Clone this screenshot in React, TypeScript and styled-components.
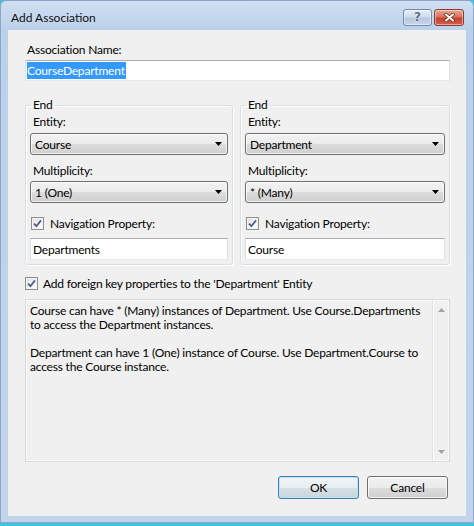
import styled, { createGlobalStyle } from "styled-components";

const GlobalStyle = createGlobalStyle`
  html, body {
    margin: 0;
    padding: 0;
  }
  body {
    background: #41c1dd;
    font-family: Lato, "Liberation Sans", sans-serif;
    font-size: 12px;
    color: #000;
  }
  * {
    box-sizing: border-box;
  }
`;

const Window = styled.div`
  width: 474px;
  height: 523px;
  border: 1px solid #8ea5c4;
  border-radius: 6px 6px 0 0;
  background: linear-gradient(180deg, #d0e0f2 0px, #bbd0ea 29px, #c2d5ec 100%);
  display: flex;
  flex-direction: column;
`;

const TitleBar = styled.div`
  height: 29px;
  flex: none;
  padding: 3px 9px 0 10px;
  display: flex;
  align-items: center;
  justify-content: space-between;
`;

const Title = styled.span`
  font-size: 12px;
  color: #111;
`;

const CaptionButtons = styled.div`
  display: flex;
  gap: 2px;
`;

const CaptionButton = styled.div<{ $close?: boolean; $w: number }>`
  width: ${({ $w }) => $w}px;
  height: 17px;
  border-radius: 3px;
  border: 1px solid ${({ $close }) => ($close ? "#8d3b30" : "#7189ab")};
  background: ${({ $close }) =>
    $close
      ? "linear-gradient(180deg, #e9a797 0%, #d7735f 45%, #c4432f 55%, #d2614b 100%)"
      : "linear-gradient(180deg, #e6eef8 0%, #cfdcec 45%, #b7c9e0 55%, #c7d6e8 100%)"};
  box-shadow: inset 0 0 0 1px rgba(255, 255, 255, 0.45);
  display: flex;
  align-items: center;
  justify-content: center;
`;

const HelpGlyph = styled.span`
  font-family: "DejaVu Sans", sans-serif;
  font-size: 12px;
  font-weight: bold;
  line-height: 1;
  color: #5d6f8b;
  text-shadow: 0 0 1px #fff, 0 0 1px #fff;
`;

const Client = styled.div`
  flex: 1;
  margin: 0 7px 6px 7px;
  background: #f0f0f0;
  padding: 0 16px 0 17px;
  letter-spacing: -0.2px;
  display: flex;
  flex-direction: column;
`;

const Label = styled.div<{ $top?: number; $indent?: number }>`
  line-height: 16px;
  height: 16px;
  margin-top: ${({ $top }) => $top ?? 0}px;
  padding-left: ${({ $indent }) => $indent ?? 0}px;
  white-space: nowrap;
`;

const TextBox = styled.div<{ $top?: number; $h: number }>`
  height: ${({ $h }) => $h}px;
  margin-top: ${({ $top }) => $top ?? 0}px;
  background: #fff;
  border: 1px solid #dbdfe6;
  border-top-color: #abadb3;
  border-bottom-color: #e3e9ef;
  padding: 0 2px;
  display: flex;
  align-items: center;
  white-space: nowrap;
`;

const Selected = styled.span`
  background: #3399ff;
  color: #fff;
  line-height: 17px;
  padding: 0 1px 0 0;
  margin-left: -1px;
`;

const Groups = styled.div`
  display: grid;
  grid-template-columns: 208px 210px;
  gap: 7px;
  margin-top: 16px;
`;

const Group = styled.fieldset`
  margin: 0;
  min-width: 0;
  border: 1px solid #d5dfe5;
  border-radius: 3px;
  box-shadow: inset 1px 1px 0 #fff, 1px 1px 0 #fff;
  padding: 0 4px 4px 4px;
  display: flex;
  flex-direction: column;
`;

const Legend = styled.legend`
  padding: 0 2px;
  margin-left: 1px;
  line-height: 16px;
  font-size: 12px;
`;

const Combo = styled.div<{ $top: number }>`
  height: 22px;
  margin-top: ${({ $top }) => $top}px;
  border: 1px solid #707070;
  border-radius: 3px;
  background: linear-gradient(180deg, #f2f2f2 0%, #ebebeb 50%, #dddddd 50%, #cfcfcf 100%);
  box-shadow: inset 0 0 0 1px rgba(255, 255, 255, 0.7);
  padding: 0 5px 0 4px;
  display: flex;
  align-items: center;
  justify-content: space-between;
  white-space: nowrap;
`;

const CheckRow = styled.div<{ $top: number; $gap: number }>`
  height: 16px;
  margin-top: ${({ $top }) => $top}px;
  display: flex;
  align-items: center;
  gap: ${({ $gap }) => $gap}px;
  white-space: nowrap;
`;

const CheckBox = styled.span<{ $shift?: number }>`
  width: 13px;
  height: 13px;
  flex: none;
  margin-left: ${({ $shift }) => $shift ?? 0}px;
  border: 1px solid #8e8f8f;
  background: linear-gradient(135deg, #dcdcdc 0%, #f6f6f6 60%, #ffffff 100%);
  box-shadow: inset 0 0 0 1px #f4f4f4;
  display: flex;
  align-items: center;
  justify-content: center;
`;

const Description = styled.div`
  height: 163px;
  margin-top: 8px;
  border: 1px solid #d9d9d9;
  box-shadow: inset 0 0 0 1px #f9f9f9;
  background: #f0f0f0;
  display: flex;
`;

const DescriptionText = styled.div`
  flex: 1;
  padding: 4px 0 0 4px;
  line-height: 14px;
  white-space: pre;
  color: #000;
`;

const ScrollBar = styled.div`
  width: 16px;
  flex: none;
  border-left: 1px solid #fbfbfb;
  box-shadow: -1px 0 0 #e4e4e4;
  display: flex;
  flex-direction: column;
  justify-content: space-between;
  align-items: center;
  padding: 8px 0 7px 0;
`;

const ButtonRow = styled.div`
  display: flex;
  justify-content: flex-end;
  gap: 8px;
  margin-top: 14px;
  margin-right: 2px;
`;

const Button = styled.div<{ $default?: boolean }>`
  width: 81px;
  height: 23px;
  border-radius: 3px;
  border: 1px solid ${({ $default }) => ($default ? "#3c7fb1" : "#707070")};
  background: ${({ $default }) =>
    $default
      ? "linear-gradient(180deg, #f0f4f7 0%, #e8eef2 50%, #d6e0e6 50%, #c9d5dc 100%)"
      : "linear-gradient(180deg, #f2f2f2 0%, #ebebeb 50%, #dddddd 50%, #cfcfcf 100%)"};
  box-shadow: inset 0 0 0 1px
    ${({ $default }) => ($default ? "#bfe3f7" : "rgba(255, 255, 255, 0.75)")};
  display: flex;
  align-items: center;
  justify-content: center;
`;

function Arrow() {
  return (
    <svg width="7" height="4" viewBox="0 0 7 4">
      <path d="M0 0 H7 L3.5 4 Z" fill="#000" />
    </svg>
  );
}

function ScrollArrow({ up }: { up?: boolean }) {
  return (
    <svg width="7" height="4" viewBox="0 0 7 4">
      <path d={up ? "M0 4 H7 L3.5 0 Z" : "M0 0 H7 L3.5 4 Z"} fill="#a3a3a3" />
    </svg>
  );
}

function Tick() {
  return (
    <svg width="9" height="9" viewBox="0 0 9 9">
      <path d="M1 4.6 L3.4 7.2 L8 1.4" fill="none" stroke="#4a5f8c" strokeWidth="1.8" />
    </svg>
  );
}

function CloseGlyph() {
  return (
    <svg width="11" height="9" viewBox="0 0 11 9">
      <path d="M2 1.5 L9 7.5 M9 1.5 L2 7.5" stroke="#6b2418" strokeWidth="3.4" strokeLinecap="round" />
      <path d="M2 1.5 L9 7.5 M9 1.5 L2 7.5" stroke="#fff" strokeWidth="2" strokeLinecap="round" />
    </svg>
  );
}

type EndProps = {
  entity: string;
  multiplicity: string;
  navigation: string;
};

function EndGroup({ entity, multiplicity, navigation }: EndProps) {
  return (
    <Group>
      <Legend>End</Legend>
      <Label $top={1} $indent={3}>Entity:</Label>
      <Combo $top={3}>
        <span>{entity}</span>
        <Arrow />
      </Combo>
      <Label $top={8} $indent={3}>Multiplicity:</Label>
      <Combo $top={2}>
        <span>{multiplicity}</span>
        <Arrow />
      </Combo>
      <CheckRow $top={12} $gap={6}>
        <CheckBox $shift={1}>
          <Tick />
        </CheckBox>
        <span>Navigation Property:</span>
      </CheckRow>
      <TextBox $top={7} $h={22}>{navigation}</TextBox>
    </Group>
  );
}

const description = `Course can have * (Many) instances of Department. Use Course.Departments
to access the Department instances.

Department can have 1 (One) instance of Course. Use Department.Course to
access the Course instance.`;

export default function App() {
  return (
    <>
      <GlobalStyle />
      <Window>
        <TitleBar>
          <Title>Add Association</Title>
          <CaptionButtons>
            <CaptionButton $w={29}>
              <HelpGlyph>?</HelpGlyph>
            </CaptionButton>
            <CaptionButton $w={30} $close>
              <CloseGlyph />
            </CaptionButton>
          </CaptionButtons>
        </TitleBar>
        <Client>
          <Label $top={12} $indent={2}>Association Name:</Label>
          <TextBox $top={2} $h={21}>
            <Selected>CourseDepartment</Selected>
          </TextBox>
          <Groups>
            <EndGroup entity="Course" multiplicity="1 (One)" navigation="Departments" />
            <EndGroup entity="Department" multiplicity="* (Many)" navigation="Course" />
          </Groups>
          <CheckRow $top={10} $gap={5}>
            <CheckBox>
              <Tick />
            </CheckBox>
            <span>Add foreign key properties to the 'Department' Entity</span>
          </CheckRow>
          <Description>
            <DescriptionText>{description}</DescriptionText>
            <ScrollBar>
              <ScrollArrow up />
              <ScrollArrow />
            </ScrollBar>
          </Description>
          <ButtonRow>
            <Button $default>OK</Button>
            <Button>Cancel</Button>
          </ButtonRow>
        </Client>
      </Window>
    </>
  );
}
